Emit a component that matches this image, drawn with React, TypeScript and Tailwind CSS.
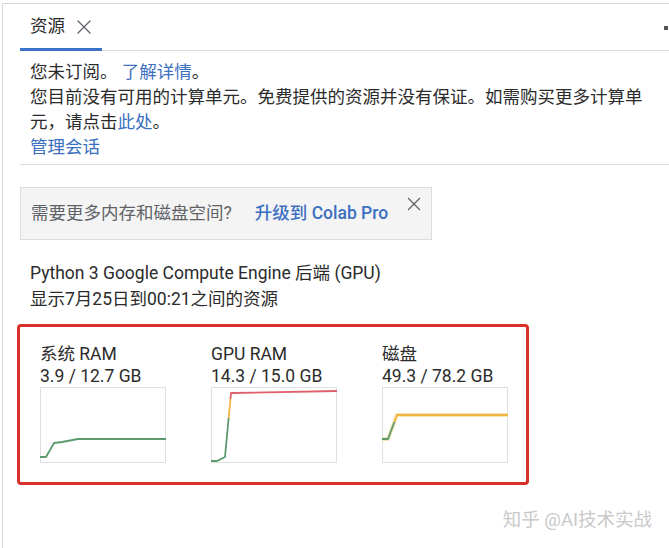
import { X } from 'lucide-react'

type Pt = [number, number]

interface Meter {
  label: string
  value: string
  points: Pt[]
  // colour bands, from the top of the chart down: [untilY, colour]
  bands: [number, string][]
  halo?: string
}

const GREEN = '#5a9a6c'
const ORANGE = '#f0b442'
const RED = '#e0606a'

const meters: Meter[] = [
  {
    label: '系统 RAM',
    value: '3.9 / 12.7 GB',
    points: [[0, 70], [6, 70], [14, 56], [22, 55], [38, 52], [126, 52]],
    bands: [[76, GREEN]],
  },
  {
    label: 'GPU RAM',
    value: '14.3 / 15.0 GB',
    points: [[0, 74], [6, 74], [14, 70], [20, 6], [126, 4]],
    bands: [[12, RED], [31, ORANGE], [76, GREEN]],
  },
  {
    label: '磁盘',
    value: '49.3 / 78.2 GB',
    points: [[0, 52], [6, 52], [15, 28], [126, 28]],
    bands: [[35, ORANGE], [76, GREEN]],
    halo: '#f7d99a',
  },
]

function Chart({ m, id }: { m: Meter; id: string }) {
  const pts = m.points.map((p) => p.join(',')).join(' ')
  const stops: { off: number; color: string }[] = []
  let prev = 0
  m.bands.forEach(([until, color]) => {
    stops.push({ off: prev / 76, color })
    stops.push({ off: until / 76, color })
    prev = until
  })
  return (
    <div className="w-[126px] h-[76px] border border-[#e0e0e0] bg-white">
      <svg width="124" height="74" viewBox="1 1 124 74" className="block overflow-visible">
        <defs>
          <linearGradient id={id} gradientUnits="userSpaceOnUse" x1="0" y1="0" x2="0" y2="76">
            {stops.map((s, i) => (
              <stop key={i} offset={s.off} stopColor={s.color} />
            ))}
          </linearGradient>
        </defs>
        {m.halo && (
          <polyline points={pts} fill="none" stroke={m.halo} strokeWidth="4" strokeLinejoin="round" opacity="0.7" />
        )}
        <polyline points={pts} fill="none" stroke={`url(#${id})`} strokeWidth="1.8" strokeLinejoin="round" />
      </svg>
    </div>
  )
}

export default function App() {
  return (
    <div
      className="w-[669px] h-[548px] bg-white relative overflow-hidden pl-[2px] pt-[3px] text-[#2b2b2b]"
      style={{ fontFamily: 'Roboto, "Noto Sans CJK SC", sans-serif' }}
    >
      <div className="h-full border-l border-t border-[#d6d6d6] pl-[17px]">
        {/* tab bar */}
        <div className="flex items-end justify-between border-b border-[#dadce0] h-[47px]">
          <div className="flex items-center gap-[7px] h-full pl-[10px] pr-[6px] border-b-[3px] border-[#3a73c9] -mb-px">
            <span className="text-[17.5px]">资源</span>
            <X size={24} strokeWidth={1.3} className="text-[#5f6368]" />
          </div>
          <div className="self-center w-[4px] h-[4px] bg-[#555] mr-[1px] mt-[1px]" />
        </div>

        {/* subscription info */}
        <div className="pl-[10px] pt-[9px] pb-[4px] border-b border-[#dadce0] text-[17.5px] leading-[25px]">
          <div>
            您未订阅。 <span className="text-[#3b6fc0]">了解详情</span>。
          </div>
          <div>您目前没有可用的计算单元。免费提供的资源并没有保证。如需购买更多计算单</div>
          <div>
            元，请点击<span className="text-[#3b6fc0]">此处</span>。
          </div>
          <div className="text-[#3b6fc0]">管理会话</div>
        </div>

        {/* upgrade banner */}
        <div className="mt-[22px] w-[412px] h-[53px] bg-[#f4f4f4] border border-[#dadce0] flex items-start pl-[10px] pr-[6px]">
          <div className="flex-1 h-full flex items-center text-[17.5px]">
            <span className="text-[#5f6368]">需要更多内存和磁盘空间?</span>
            <span className="ml-[23px] text-[#3b6fc0] font-medium">升级到 Colab Pro</span>
          </div>
          <X size={22} strokeWidth={1.4} className="mt-[5px] text-[#5f6368]" />
        </div>

        {/* backend */}
        <div className="mt-[20px] pl-[10px] text-[17.5px] leading-[26px]">
          <div>Python 3 Google Compute Engine 后端 (GPU)</div>
          <div>显示7月25日到00:21之间的资源</div>
        </div>

        {/* meters */}
        <div className="mt-[12px] -ml-[3px] w-[512px] h-[161px] border-[3px] border-[#d8312a] rounded-[4px] pl-[20px] pt-[17px] flex gap-[45px]">
          {meters.map((m, i) => (
            <div key={m.label} className="w-[126px]">
              <div className="text-[17.5px] leading-[21.5px] whitespace-nowrap">{m.label}</div>
              <div className="text-[17.5px] leading-[21.5px] whitespace-nowrap">{m.value}</div>
              <Chart m={m} id={`g${i}`} />
            </div>
          ))}
        </div>
      </div>

      {/* watermark */}
      <div
        className="absolute right-[17px] top-[507px] text-[18.5px] text-[#c9c9c9] whitespace-nowrap"
        style={{ textShadow: '1px 1px 0 #ffffff' }}
      >
        知乎 @AI技术实战
      </div>
    </div>
  )
}
